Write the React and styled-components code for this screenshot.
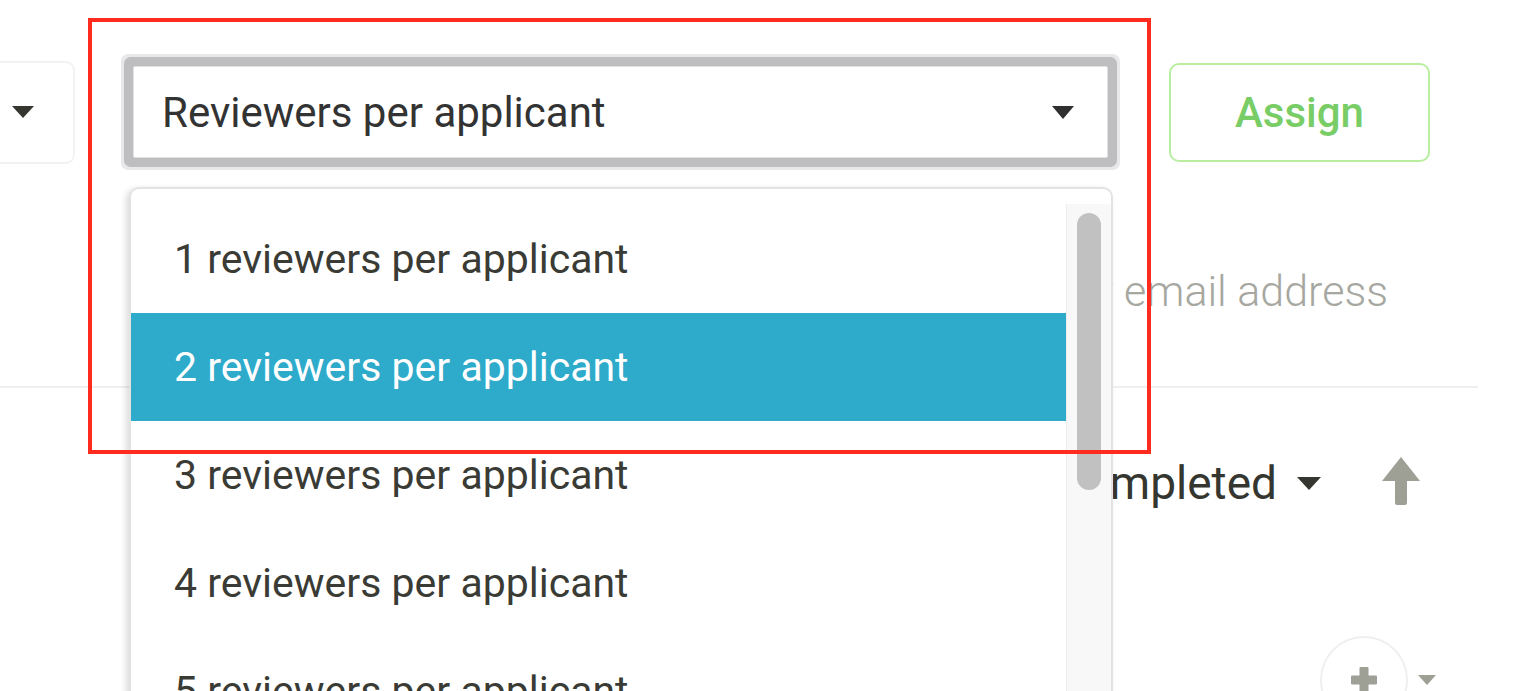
import React from 'react';
import styled, { createGlobalStyle } from 'styled-components';

const GlobalStyle = createGlobalStyle`
  html, body {
    margin: 0;
    padding: 0;
    background: #fff;
    overflow: hidden;
  }
  body {
    font-family: Roboto, "Liberation Sans", sans-serif;
  }
`

const Page = styled.div`
  position: relative;
  width: 1524px;
  height: 691px;
  overflow: hidden;
  background: #fff;
`

const Toolbar = styled.div`
  display: flex;
  align-items: center;
  height: 120px;
  margin-top: 52px;
`

const Caret = styled.span`
  display: inline-block;
  width: 0;
  height: 0;
  border-left: ${({ size }) => size / 2}px solid transparent;
  border-right: ${({ size }) => size / 2}px solid transparent;
  border-top: ${({ size }) => Math.round(size * 0.55)}px solid ${({ color }) => color || '#34362f'};
  flex-shrink: 0;
`

const StubSelect = styled.div`
  display: flex;
  align-items: center;
  justify-content: flex-end;
  box-sizing: border-box;
  width: 115px;
  height: 103px;
  margin-left: -40px;
  padding-right: 39px;
  border: 2px solid #f2f2f2;
  border-radius: 9px;
`

const Select = styled.div`
  display: flex;
  align-items: center;
  justify-content: space-between;
  box-sizing: border-box;
  width: 975px;
  height: 92px;
  margin-left: 58px;
  padding: 0 33px 0 28px;
  background: #fff;
  border: 1px solid #e2e2e4;
  border-radius: 2px;
  box-shadow: 0 0 0 9px #bebec1, 0 0 0 12px #e8e8ea;
  font-size: 42px;
  color: #333;
`

const AssignButton = styled.button`
  box-sizing: border-box;
  width: 261px;
  height: 99px;
  margin-left: 61px;
  padding: 0;
  background: #fff;
  border: 2px solid #b9eea0;
  border-radius: 10px;
  font-family: Roboto, "Liberation Sans", sans-serif;
  font-size: 42px;
  font-weight: 500;
  color: #78cd66;
`

const SearchRow = styled.div`
  display: flex;
  justify-content: flex-end;
  margin-top: 95px;
  padding-right: 136px;
  font-size: 43px;
  line-height: 48px;
  font-weight: 300;
  color: #a6a7a0;
`

const Divider = styled.div`
  width: 1478px;
  height: 2px;
  margin-top: 71px;
  background: #efefef;
`

const SortRow = styled.div`
  display: flex;
  align-items: center;
  justify-content: flex-end;
  margin-top: 71px;
  padding-right: 104px;
  font-size: 46px;
  line-height: 48px;
  color: #34362f;
`

const SortLabel = styled.span`
  margin-right: 20px;
`

const SortArrow = styled.svg`
  margin-left: 61px;
  margin-top: -4px;
`

const FabRow = styled.div`
  display: flex;
  align-items: center;
  justify-content: flex-end;
  margin-top: 129px;
  padding-right: 88px;
`

const Fab = styled.div`
  display: flex;
  align-items: center;
  justify-content: center;
  box-sizing: border-box;
  width: 88px;
  height: 88px;
  margin-right: 10px;
  border: 2px solid #efefef;
  border-radius: 50%;
`

const Menu = styled.div`
  position: absolute;
  left: 129px;
  top: 187px;
  width: 984px;
  height: 540px;
  display: flex;
  box-sizing: border-box;
  background: #fff;
  border: 2px solid #e3e3e3;
  border-bottom: none;
  border-radius: 10px 10px 0 0;
  box-shadow: -3px 2px 6px rgba(0, 0, 0, 0.14);
`

const List = styled.ul`
  flex: 1;
  margin: 0;
  padding: 16px 0 0;
  list-style: none;
`

const Item = styled.li`
  display: flex;
  align-items: center;
  height: 108px;
  padding-left: 43px;
  font-size: 41px;
  color: ${({ active }) => active ? '#fff' : '#3a3b35'};
  background: ${({ active }) => active ? '#2eaaca' : 'transparent'};
`

const Track = styled.div`
  width: 44px;
  margin-top: 15px;
  background: #f8f8f8;
  border-left: 1px solid #ececec;
`

const Thumb = styled.div`
  width: 24px;
  height: 277px;
  margin: 9px auto 0;
  border-radius: 12px;
  background: #c1c1c1;
`

const Highlight = styled.div`
  position: absolute;
  left: 88px;
  top: 18px;
  width: 1063px;
  height: 436px;
  box-sizing: border-box;
  border: 4px solid #ff2b1e;
  pointer-events: none;
`

const options = [1, 2, 3, 4, 5, 6];

export default function App() {
  return (
    <Page>
      <GlobalStyle />
      <Toolbar>
        <StubSelect>
          <Caret size={22} />
        </StubSelect>
        <Select>
          <span>Reviewers per applicant</span>
          <Caret size={23} color="#303030" />
        </Select>
        <AssignButton>Assign</AssignButton>
      </Toolbar>

      <SearchRow>Reviewer name or email address</SearchRow>
      <Divider />

      <SortRow>
        <SortLabel>Sort by: Not completed</SortLabel>
        <Caret size={24} />
        <SortArrow width="38" height="48" viewBox="0 0 38 48">
          <path d="M19 0 L38 24 L25 24 L25 46 Q25 48 23 48 L15 48 Q13 48 13 46 L13 24 L0 24 Z" fill="#9ea096" />
        </SortArrow>
      </SortRow>

      <FabRow>
        <Fab>
          <svg width="26" height="26" viewBox="0 0 26 26">
            <rect x="8.5" y="0" width="9" height="26" rx="1" fill="#9ea096" />
            <rect x="0" y="8.5" width="26" height="9" rx="1" fill="#9ea096" />
          </svg>
        </Fab>
        <Caret size={19} color="#9ea096" />
      </FabRow>

      <Menu>
        <List>
          {options.map((n) => (
            <Item key={n} active={n === 2}>{n} reviewers per applicant</Item>
          ))}
        </List>
        <Track>
          <Thumb />
        </Track>
      </Menu>

      <Highlight />
    </Page>
  );
}
